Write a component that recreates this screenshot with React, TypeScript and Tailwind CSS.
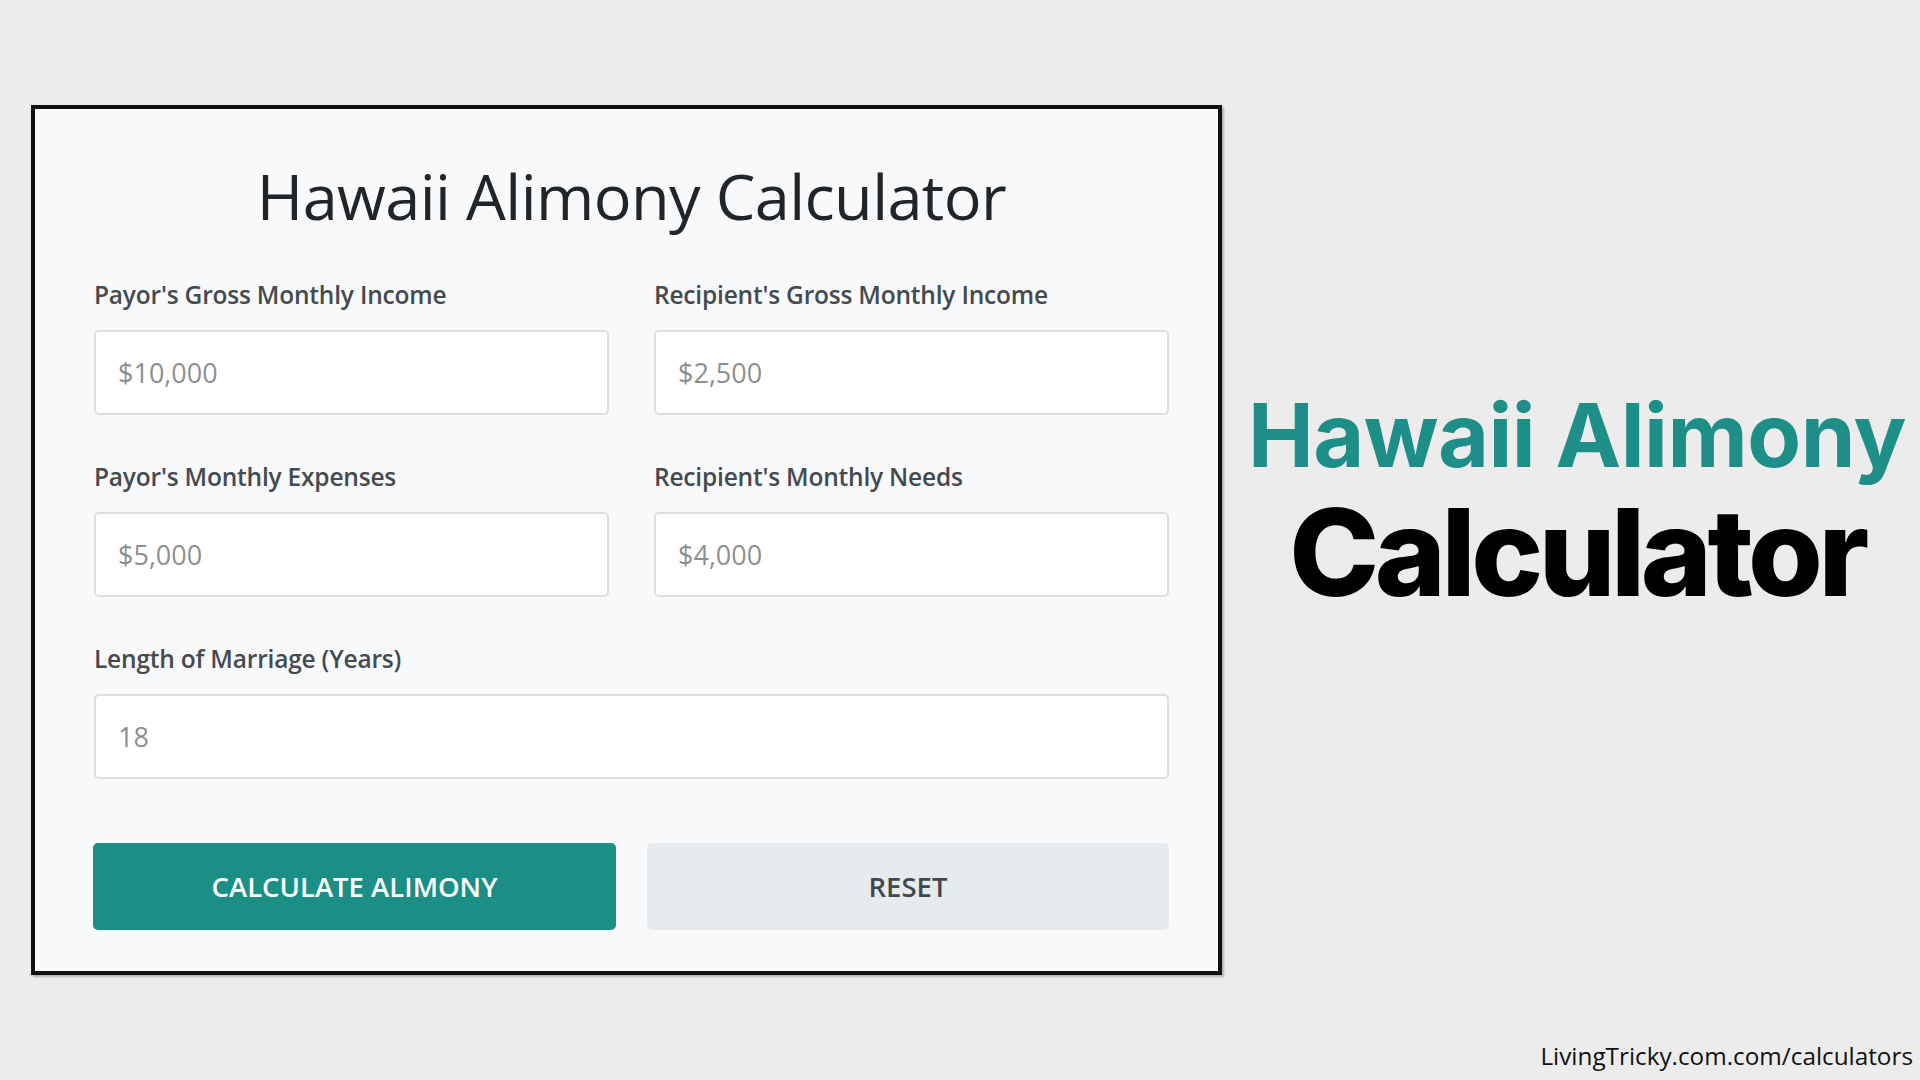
import React from "react";

const formFont = { fontFamily: '"Open Sans", "Noto Sans", sans-serif' };

function Field({ label, placeholder }: { label: string; placeholder: string }) {
  return (
    <div className="flex flex-col">
      <label className="text-[24.5px] leading-[30px] font-semibold text-[#454a4f] tracking-[-0.2px]">
        {label}
      </label>
      <input
        className="mt-[20px] h-[85px] w-full rounded-[5px] border-2 border-[#dcdfe2] bg-white px-[22px] text-[27px] text-[#333] placeholder:text-[#8c8f92] outline-none"
        placeholder={placeholder}
        style={formFont}
      />
    </div>
  );
}

export default function App() {
  return (
    <div className="flex h-[1080px] w-[1920px] flex-col bg-[#ececec]" style={formFont}>
      <div className="flex pl-[31px] pt-[105px]">
        <div className="flex h-[870px] w-[1191px] flex-col border-4 border-[#111] bg-[#f8f9fa] pl-[59px] pr-[49px] pt-[47px] shadow-[2px_2px_2px_rgba(0,0,0,0.25)]">
          <h1 className="text-center text-[63px] font-medium leading-[80px] tracking-[-0.6px] text-[#222528]">
            Hawaii Alimony Calculator
          </h1>

          <div className="mt-[44px] grid grid-cols-2 gap-x-[45px] gap-y-[47px]">
            <Field label="Payor's Gross Monthly Income" placeholder="$10,000" />
            <Field label="Recipient's Gross Monthly Income" placeholder="$2,500" />
            <Field label="Payor's Monthly Expenses" placeholder="$5,000" />
            <Field label="Recipient's Monthly Needs" placeholder="$4,000" />
            <div className="col-span-2">
              <Field label="Length of Marriage (Years)" placeholder="18" />
            </div>
          </div>

          <div className="mt-[64px] flex gap-[31px]">
            <button className="h-[87px] w-[523px] -ml-[1px] rounded-[5px] bg-[#1b8e86] text-[27.5px] font-semibold uppercase text-white">
              Calculate Alimony
            </button>
            <button className="h-[87px] flex-1 rounded-[5px] bg-[#e8ebee] text-[27.5px] font-semibold uppercase text-[#43484d]">
              Reset
            </button>
          </div>
        </div>

        <div
          className="flex flex-1 flex-col items-center pl-[12px] pt-[280px]"
          style={{ fontFamily: 'Inter, "Noto Sans", sans-serif' }}
        >
          <div className="text-[88px] font-bold leading-[100px] tracking-[-0.5px] text-[#1e8e88]">
            Hawaii Alimony
          </div>
          <div className="mt-[4px] text-[121px] font-extrabold leading-[126px] tracking-[-4.5px] text-black">
            Calculator
          </div>
        </div>
      </div>

      <div className="mt-auto pb-[8px] pr-[7px] text-right text-[24.3px] leading-[32px] text-[#111]">
        LivingTricky.com.com/calculators
      </div>
    </div>
  );
}
